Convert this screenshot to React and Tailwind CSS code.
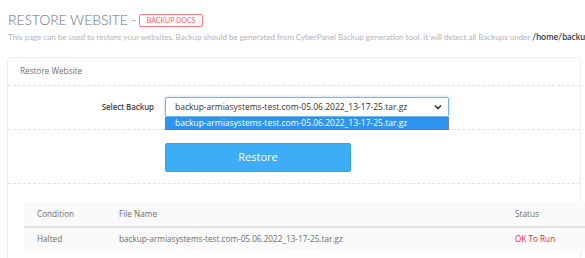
import React from "react";

// restore website panel
const FILE = "backup-armiasystems-test.com-05.06.2022_13-17-25.tar.gz";

const App = () => {
  return (
    <div className="w-[585px] h-[258px] overflow-hidden bg-white font-['Open_Sans',sans-serif] text-[#666]">
      {/* page title */}
      <div className="pl-2 pt-[11px] whitespace-nowrap">
        <div className="flex items-center gap-[2px]">
          <h2 className="font-['Lato',sans-serif] font-light text-[14px] leading-[18px] tracking-[-0.1px] text-[#6d7079]">
            RESTORE WEBSITE -
          </h2>
          <span className="border-[1.5px] border-[#ff7a80] rounded-[2px] px-[7px] h-[13px] flex items-center text-[7px] font-['Lato',sans-serif] text-[#ff5a60]">
            BACKUP DOCS
          </span>
        </div>
        <p className="mt-[2px] font-['Lato',sans-serif] text-[8px] leading-[12px] text-[#b3b3b3]">
          This page can be used to restore your websites. Backup should be generated from CyberPanel Backup generation tool, it will detect all Backups under{" "}
          <strong className="text-[#333] text-[8.8px] font-semibold">/home/backup</strong>
        </p>
      </div>

      {/* card */}
      <div className="ml-[7px] mt-[14px] w-[574px] h-[300px] border border-[#e8edf3] rounded-[3px] bg-white">
        <div className="h-[28px] px-3 flex items-center text-[8.2px] text-[#707070] border-b border-dashed border-[#e2e2e2]">
          Restore Website
        </div>

        <div className="pt-[11px] pb-[12px] border-b border-dashed border-[#e2e2e2]">
          <div className="flex items-start">
            <label className="w-[146px] h-[20px] flex items-center justify-end text-[8px] tracking-[-0.1px] font-semibold text-[#444]">
              Select Backup
            </label>
            <div className="ml-[11px] w-[284px] relative">
              <div className="h-[20px] border border-[#75b6ec] rounded-[2px] shadow-[0_0_3px_rgba(102,175,233,0.6)] flex items-center pl-[9px] pr-[6px] text-[8.5px] text-[#333]">
                <span className="flex-1">{FILE}</span>
                <svg width="8" height="6" viewBox="0 0 8 6">
                  <path d="M1 1.5 L4 4.5 L7 1.5" fill="none" stroke="#333" strokeWidth="1.6" />
                </svg>
              </div>
              <div className="absolute left-0 top-[20px] w-full h-[13px] bg-[#2f94f0] border border-[#6f7f90] flex items-center pl-[9px] text-[8.5px] text-white">
                {FILE}
              </div>
            </div>
          </div>
        </div>

        <div className="pt-[13px] pb-[11px] border-b border-dashed border-[#e2e2e2]">
          <button className="ml-[157px] w-[186px] h-[29px] bg-[#3dadf6] border border-[#34a2ea] rounded-[2px] text-white text-[11px]">
            Restore
          </button>
        </div>

        <div className="pl-[16px] pt-[18px]">
          <table className="w-[580px] bg-[#fafafa] text-[8.2px] text-[#6d6d6d] border-collapse">
            <thead>
              <tr className="h-[25px] border-b-2 border-[#e4e4e4]">
                <th className="pl-[13px] w-[95px] text-left font-normal">Condition</th>
                <th className="text-left font-normal w-[396px]">File Name</th>
                <th className="text-left font-normal">Status</th>
              </tr>
            </thead>
            <tbody>
              <tr className="h-[23px]">
                <td className="pl-[13px]">Halted</td>
                <td>{FILE}</td>
                <td className="text-[#ff1a1a] font-medium">OK To Run</td>
              </tr>
            </tbody>
          </table>
        </div>
      </div>
    </div>
  );
};

export default App;
